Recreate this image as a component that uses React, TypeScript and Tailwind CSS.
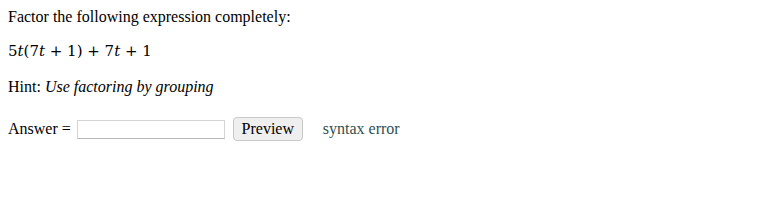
export default function App() {
  return (
    <div className="min-h-screen bg-white px-2 text-[16px] leading-[18px] text-black" style={{ fontFamily: '"Liberation Serif", "Times New Roman", serif' }}>
      <p className="pt-[8px]">Factor the following expression completely:</p>
      <p className="mt-[16px] font-['DejaVu_Serif','Liberation_Serif',serif] text-[15px]">
        5<i>t</i>(7<i>t</i> + 1) + 7<i>t</i> + 1
      </p>
      <p className="mt-[18px]">
        Hint: <i>Use factoring by grouping</i>
      </p>
      <div className="mt-[21px] flex items-center">
        <span>Answer =</span>
        <input
          type="text"
          className="ml-[6px] h-[19px] w-[148px] border border-[#d4d4d4] border-b-[#b8b8b8] bg-white outline-none"
        />
        <button
          type="button"
          className="ml-[8px] h-[24px] w-[70px] rounded-[4px] border border-[#c8c8c8] bg-[#efefef] text-[16px]"
        >
          Preview
        </button>
        <span className="ml-[20px] text-[#2f4f4f]">syntax error</span>
      </div>
    </div>
  );
}
